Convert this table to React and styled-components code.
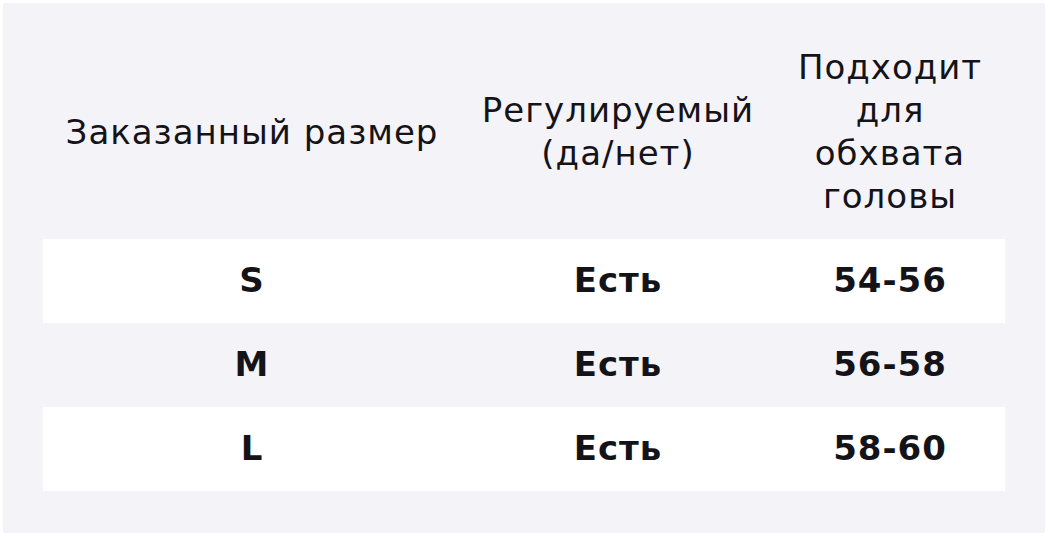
import React from 'react';
import styled, { createGlobalStyle } from 'styled-components';

const GlobalStyle = createGlobalStyle`
  html, body {
    margin: 0;
    padding: 0;
    background: #ffffff;
  }
  body {
    font-family: 'DejaVu Sans', 'Liberation Sans', sans-serif;
    color: #141318;
  }
`;

const Panel = styled.div`
  margin: 3px;
  padding: 40px 40px 42px;
  background: #f4f3f8;
`;

const Table = styled.table`
  width: 100%;
  border-collapse: collapse;
  table-layout: fixed;
  font-size: 34px;
  line-height: 43px;
  letter-spacing: 1px;
`;

const HeadCell = styled.th`
  box-sizing: border-box;
  width: ${(p) => p.$width}px;
  padding: 3px 16px 21px;
  font-weight: 400;
  text-align: center;
  vertical-align: middle;
`;

const Row = styled.tr`
  background: ${(p) => (p.$striped ? 'transparent' : '#ffffff')};
`;

const Cell = styled.td`
  padding: 20px 16px 21px;
  font-weight: 700;
  text-align: center;
  vertical-align: middle;
`;

const sizes = [
  { size: 'S', adjustable: 'Есть', fits: '54-56' },
  { size: 'M', adjustable: 'Есть', fits: '56-58' },
  { size: 'L', adjustable: 'Есть', fits: '58-60' },
];

const App = () => (
  <>
    <GlobalStyle />
    <Panel>
      <Table>
        <thead>
          <tr>
            <HeadCell $width={418}>Заказанный размер</HeadCell>
            <HeadCell $width={314}>Регулируемый (да/нет)</HeadCell>
            <HeadCell $width={230}>Подходит для обхвата головы</HeadCell>
          </tr>
        </thead>
        <tbody>
          {sizes.map((item, index) => (
            <Row key={item.size} $striped={index % 2 === 1}>
              <Cell>{item.size}</Cell>
              <Cell>{item.adjustable}</Cell>
              <Cell>{item.fits}</Cell>
            </Row>
          ))}
        </tbody>
      </Table>
    </Panel>
  </>
);

export default App;
